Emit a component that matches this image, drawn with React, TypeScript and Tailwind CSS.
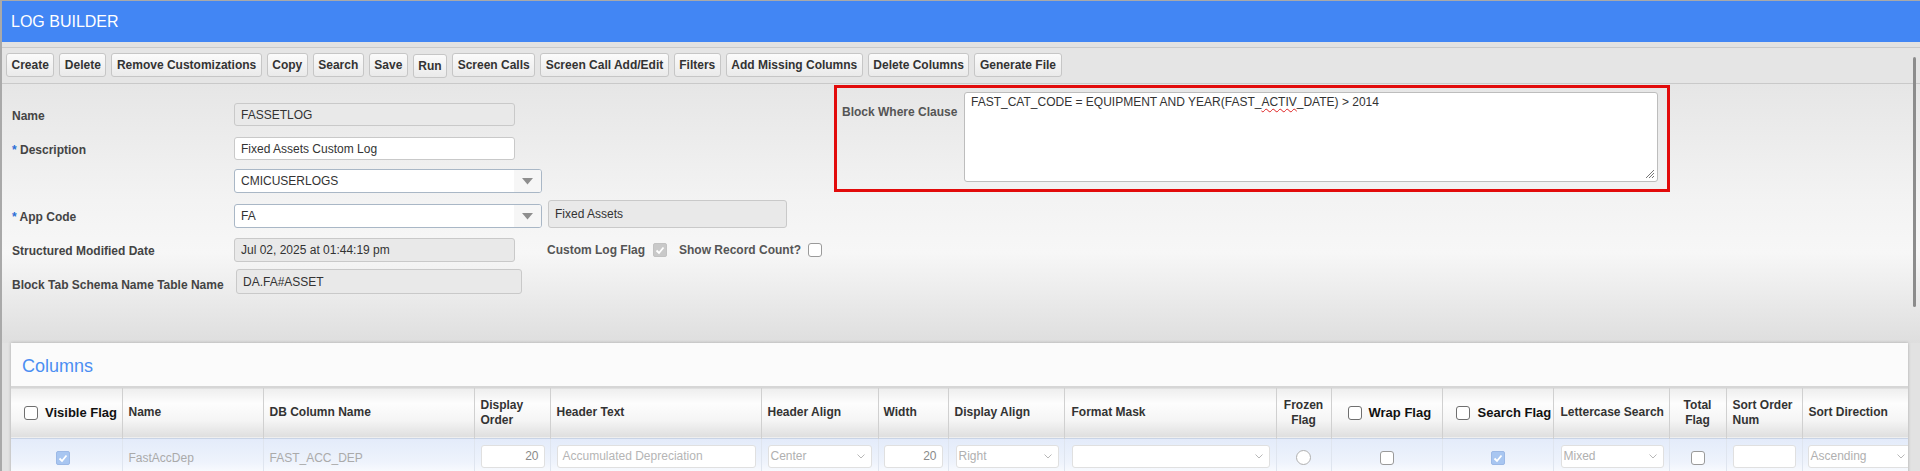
import React from "react";

const buttons = [
  "Create",
  "Delete",
  "Remove Customizations",
  "Copy",
  "Search",
  "Save",
  "Run",
  "Screen Calls",
  "Screen Call Add/Edit",
  "Filters",
  "Add Missing Columns",
  "Delete Columns",
  "Generate File",
];

function Check({ on, tone }: { on: boolean; tone?: "gray" | "blue" | "dark" }) {
  if (on) {
    const bg = tone === "gray" ? "bg-[#c9c9c9] border-[#c2c2c2]" : "bg-[#a8c6f1] border-[#9cb9e6]";
    return (
      <span className={`inline-flex w-[14px] h-[14px] rounded-[2px] border items-center justify-center ${bg}`}>
        <svg width="12" height="12" viewBox="0 0 12 12">
          <polyline points="2.5,6.5 5,9 9.5,3.5" fill="none" stroke="#fff" strokeWidth="1.8" />
        </svg>
      </span>
    );
  }
  const border = tone === "dark" ? "border-[#6f6f6f]" : "border-[#9a9a9a]";
  return <span className={`inline-block w-[14px] h-[14px] rounded-[3px] border bg-white ${border}`} />;
}

function Triangle() {
  return (
    <svg width="11" height="7" viewBox="0 0 11 7">
      <polygon points="0,0 11,0 5.5,6.5" fill="#8e8e8e" />
    </svg>
  );
}

function Chevron() {
  return (
    <svg width="8" height="5" viewBox="0 0 8 5" className="shrink-0">
      <polyline points="0.5,0.5 4,4 7.5,0.5" fill="none" stroke="#b8b8b8" strokeWidth="1" />
    </svg>
  );
}

function FormSelect({ value }: { value: string }) {
  return (
    <div className="flex w-[308px] h-[24px] rounded-[3px] border border-[#a9b7c6] bg-white overflow-hidden">
      <div className="flex-1 flex items-center pl-[6px] text-[12px] text-[#333]">{value}</div>
      <div className="w-[27px] flex items-center justify-center bg-[#f6f6f6]">
        <Triangle />
      </div>
    </div>
  );
}

function CellSelect({ value, w }: { value: string; w: string }) {
  return (
    <div className={`${w} h-[23px] flex items-center justify-between rounded-[3px] border border-[#e0e0e0] bg-white pl-[2px] pr-[6px] text-[12px] text-[#b0b0b0]`}>
      <span>{value}</span>
      <Chevron />
    </div>
  );
}

function CellInput({ value, w, right }: { value: string; w: string; right?: boolean }) {
  return (
    <div className={`${w} h-[23px] flex items-center rounded-[3px] border border-[#e0e0e0] bg-white px-[5px] text-[12px] ${right ? "justify-end text-[#8a8a8a]" : "text-[#b5b5b5]"}`}>
      {value}
    </div>
  );
}

export default function App() {
  const label = "w-[222px] shrink-0 text-[12px] font-bold text-[#444] leading-[14px]";
  const roInput = "h-full flex items-center pl-[6px] rounded-[3px] border border-[#c9c9c9] bg-[#e9e9e9] text-[12px] text-[#333]";
  const th = "border-l border-[#d0d0d0] text-[12px] font-bold text-[#333] leading-[15px] align-middle p-0";
  const td = "border-l border-[#dfe5ef] p-0 align-top";

  return (
    <div className="w-[1920px] h-[471px] overflow-hidden relative bg-[#e2e2e2] border-t border-l-2 border-[#a9a9a9] font-['Liberation_Sans',Arial,sans-serif]">
      {/* header */}
      <div className="h-[41px] bg-[#4286f4] flex items-center pl-[9px]">
        <span className="text-white text-[16px]">LOG BUILDER</span>
      </div>

      {/* toolbar */}
      <div className="mt-[5px] h-[37px] border-y border-[#c9c9c9] bg-[#e5e5e5] flex gap-[5px] pl-[4px] pt-[5px]">
        {buttons.map((b) => (
          <div
            key={b}
            className={`h-[24px] px-[4.5px] flex items-center rounded-[3px] border border-[#c6c6c6] bg-[linear-gradient(#fbfbfb,#eaeaea)] text-[12px] font-bold text-[#333] ${b === "Run" ? "mt-[1px]" : ""}`}
          >
            {b}
          </div>
        ))}
      </div>

      {/* form */}
      <div className="h-[259px] flex bg-[linear-gradient(#e6e6e6,#f3f3f3_45%,#f7f7f7_65%,#dedede)]">
        <div className="w-[832px] shrink-0 pl-[10px] flex flex-col">
          <div className="mt-[19px] h-[23px] flex items-center">
            <div className={`${label} pt-[2px]`}>Name</div>
            <div className={`${roInput} w-[281px]`}>FASSETLOG</div>
          </div>
          <div className="mt-[11px] h-[23px] flex items-center">
            <div className={`${label} pt-[2px]`}>
              <span className="text-[#2a6fd6]">*</span> Description
            </div>
            <div className="h-full w-[281px] flex items-center pl-[6px] rounded-[3px] border border-[#c9c9c9] bg-white text-[12px] text-[#333]">
              Fixed Assets Custom Log
            </div>
          </div>
          <div className="mt-[9px] h-[24px] flex items-center">
            <div className={label}></div>
            <FormSelect value="CMICUSERLOGS" />
          </div>
          <div className="mt-[7px] h-[28px] flex items-start">
            <div className={`${label} pt-[10px]`}>
              <span className="text-[#2a6fd6]">*</span> App Code
            </div>
            <div className="mt-[4px]">
              <FormSelect value="FA" />
            </div>
            <div className={`${roInput} h-[24px] w-[239px] ml-[6px]`}>Fixed Assets</div>
          </div>
          <div className="mt-[10px] h-[24px] flex items-center">
            <div className={`${label} pt-[1px]`}>Structured Modified Date</div>
            <div className={`${roInput} w-[281px]`}>Jul 02, 2025 at 01:44:19 pm</div>
            <span className="ml-[32px] text-[12px] font-bold text-[#555]">Custom Log Flag</span>
            <span className="ml-[8px] flex"><Check on tone="gray" /></span>
            <span className="ml-[12px] text-[12px] font-bold text-[#555]">Show Record Count?</span>
            <span className="ml-[7px] flex"><Check on={false} /></span>
          </div>
          <div className="mt-[7px] h-[25px] flex items-center">
            <div className={`${label} pt-[6px]`}>Block Tab Schema Name Table Name</div>
            <div className={`${roInput} w-[286px] ml-[2px]`}>DA.FA#ASSET</div>
          </div>
        </div>

        <div className="mt-[1px] self-start w-[836px] h-[107px] border-[3px] border-[#e20b0b] flex pl-[5px] pt-[4px] pr-[9px]">
          <div className="w-[122px] shrink-0 pt-[13px] text-[12px] font-bold text-[#555] leading-[14px]">
            Block Where Clause
          </div>
          <div className="relative flex-1 h-[90px] rounded-[3px] border border-[#bdbdbd] bg-white pl-[6px] pt-[2px] text-[12px] text-[#333] leading-[15px]">
            FAST_CAT_CODE = EQUIPMENT AND YEAR(FAST_
            <span className="underline decoration-wavy decoration-[#e02020] decoration-1 underline-offset-2">ACTIV</span>
            _DATE) &gt; 2014
            <svg width="11" height="11" viewBox="0 0 11 11" className="absolute right-[2px] bottom-[2px]">
              <line x1="10" y1="2" x2="2" y2="10" stroke="#777" strokeWidth="1" />
              <line x1="10" y1="5" x2="5" y2="10" stroke="#777" strokeWidth="1" />
              <line x1="10" y1="8" x2="8" y2="10" stroke="#777" strokeWidth="1" />
            </svg>
          </div>
        </div>
      </div>

      {/* columns panel */}
      <div className="ml-[9px] w-[1897px] h-[200px] bg-[#fbfbfb] overflow-hidden shadow-[0_0_3px_rgba(0,0,0,0.25)]">
        <div className="h-[43px] flex items-center pl-[11px] pt-[3px] text-[18px] text-[#4b8ef2]">Columns</div>
        <table className="table-fixed border-collapse w-[1901px]">
          <colgroup>
            <col className="w-[111px]" />
            <col className="w-[141px]" />
            <col className="w-[211px]" />
            <col className="w-[76px]" />
            <col className="w-[211px]" />
            <col className="w-[117px]" />
            <col className="w-[70px]" />
            <col className="w-[116px]" />
            <col className="w-[212px]" />
            <col className="w-[55px]" />
            <col className="w-[111px]" />
            <col className="w-[111px]" />
            <col className="w-[116px]" />
            <col className="w-[57px]" />
            <col className="w-[76px]" />
            <col className="w-[110px]" />
          </colgroup>
          <thead>
            <tr className="h-[51px] border-t-2 border-b border-t-[#d6d6d6] border-b-[#c9d4e6] bg-[linear-gradient(#eeeeee,#fdfdfd_30%,#f5f5f5_65%,#dfdfdf)] text-left">
              <th className="p-0 align-middle">
                <div className="flex items-center pl-[13px] gap-[7px]">
                  <Check on={false} tone="dark" />
                  <span className="text-[13px] font-bold text-[#111]">Visible Flag</span>
                </div>
              </th>
              <th className={`${th} pl-[6px]`}>Name</th>
              <th className={`${th} pl-[6px]`}>DB Column Name</th>
              <th className={`${th} pl-[6px]`}>Display<br />Order</th>
              <th className={`${th} pl-[6px]`}>Header Text</th>
              <th className={`${th} pl-[6px]`}>Header Align</th>
              <th className={`${th} pl-[5px]`}>Width</th>
              <th className={`${th} pl-[6px]`}>Display Align</th>
              <th className={`${th} pl-[7px]`}>Format Mask</th>
              <th className={`${th} text-center`}>Frozen<br />Flag</th>
              <th className={th}>
                <div className="flex items-center pl-[16px] gap-[7px]">
                  <Check on={false} tone="dark" />
                  <span className="text-[13px] font-bold text-[#111]">Wrap Flag</span>
                </div>
              </th>
              <th className={th}>
                <div className="flex items-center pl-[13px] gap-[8px]">
                  <Check on={false} tone="dark" />
                  <span className="text-[13px] font-bold text-[#111]">Search Flag</span>
                </div>
              </th>
              <th className={`${th} pl-[7px]`}>Lettercase Search</th>
              <th className={`${th} text-center`}>Total<br />Flag</th>
              <th className={`${th} pl-[6px]`}>Sort Order<br />Num</th>
              <th className={`${th} pl-[6px]`}>Sort Direction</th>
            </tr>
          </thead>
          <tbody>
            <tr className="h-[40px] bg-[linear-gradient(#e3ebfa,#eef3fc_60%,#ffffff)] text-[12px] text-[#aaa]">
              <td className="p-0 align-top">
                <div className="pl-[45px] pt-[12px] flex"><Check on tone="blue" /></div>
              </td>
              <td className={`${td} pl-[6px] pt-[10px]`}>FastAccDep</td>
              <td className={`${td} pl-[6px] pt-[10px]`}>FAST_ACC_DEP</td>
              <td className={`${td} pl-[6px] pt-[6px]`}><CellInput value="20" w="w-[64px]" right /></td>
              <td className={`${td} pl-[6px] pt-[6px]`}><CellInput value="Accumulated Depreciation" w="w-[199px]" /></td>
              <td className={`${td} pl-[6px] pt-[6px]`}><CellSelect value="Center" w="w-[104px]" /></td>
              <td className={`${td} pl-[5px] pt-[6px]`}><CellInput value="20" w="w-[59px]" right /></td>
              <td className={`${td} pl-[7px] pt-[6px]`}><CellSelect value="Right" w="w-[103px]" /></td>
              <td className={`${td} pl-[7px] pt-[6px]`}><CellSelect value="" w="w-[198px]" /></td>
              <td className={`${td} pt-[11px]`}>
                <div className="flex justify-center"><span className="w-[15px] h-[15px] rounded-full border border-[#b0b0b0] bg-white" /></div>
              </td>
              <td className={`${td} pt-[12px]`}>
                <div className="flex justify-center"><Check on={false} /></div>
              </td>
              <td className={`${td} pt-[12px]`}>
                <div className="flex justify-center"><Check on tone="blue" /></div>
              </td>
              <td className={`${td} pl-[7px] pt-[6px]`}><CellSelect value="Mixed" w="w-[103px]" /></td>
              <td className={`${td} pt-[12px]`}>
                <div className="flex justify-center"><Check on={false} /></div>
              </td>
              <td className={`${td} pl-[6px] pt-[6px]`}><CellInput value="" w="w-[63px]" /></td>
              <td className={`${td} pl-[5px] pt-[6px]`}><CellSelect value="Ascending" w="w-[104px]" /></td>
            </tr>
          </tbody>
        </table>
      </div>

      {/* scrollbar thumb */}
      <div className="absolute right-[4px] top-[56px] w-[3px] h-[250px] rounded-full bg-[#8c8c8c]" />
    </div>
  );
}
